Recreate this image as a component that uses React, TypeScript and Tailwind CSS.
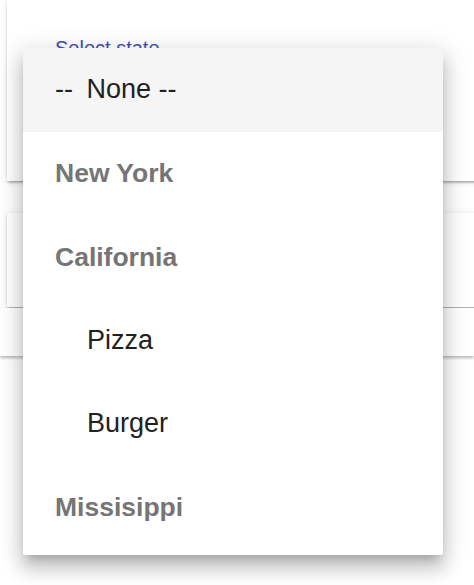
import React from "react";

type Option = { label: string; kind: "none" | "group" | "item" };

const options: Option[] = [
  { label: "--\u2002None --", kind: "none" },
  { label: "New York", kind: "group" },
  { label: "California", kind: "group" },
  { label: "Pizza", kind: "item" },
  { label: "Burger", kind: "item" },
  { label: "Missisippi", kind: "group" },
];

const cardShadow =
  "shadow-[0_2px_2px_0_rgba(0,0,0,0.14),0_3px_2px_-2px_rgba(0,0,0,0.2),0_1px_6px_0_rgba(0,0,0,0.12)]";

export default function App() {
  return (
    <div
      className="relative w-[474px] h-[585px] overflow-hidden bg-white"
      style={{ fontFamily: '"Liberation Sans", Arial, sans-serif' }}
    >
      {/* form cards behind the open menu */}
      <div className="flex flex-col">
        <div className={`ml-[7px] w-[500px] h-[181px] bg-white pl-[48px] pt-[36px] ${cardShadow}`}>
          <div className="text-[20px] leading-[24px] text-[#3f51b5]">Select state</div>
        </div>
        <div className={`ml-[7px] mt-[32px] w-[500px] h-[94px] bg-white ${cardShadow}`} />
        <div className="mt-[1px] w-full h-[48px] bg-white shadow-[0_2px_3px_0_rgba(0,0,0,0.28)]" />
      </div>

      {/* open select menu */}
      <ul className="absolute left-[23px] top-[48px] w-[420px] bg-white pb-[6px] rounded-[2px] shadow-[0_8px_9px_-5px_rgba(0,0,0,0.2),0_14px_17px_2px_rgba(0,0,0,0.14),0_5px_24px_4px_rgba(0,0,0,0.12)]">
        {options.map((o) => (
          <li
            key={o.label}
            className={
              "flex items-center h-[83.5px] leading-none " +
              (o.kind === "none"
                ? "bg-[#f5f5f5] pl-[32px] text-[27px] text-[#212121]"
                : o.kind === "group"
                ? "pl-[32px] text-[26.5px] font-bold text-[#757575]"
                : "pl-[64px] text-[27px] text-[#212121]")
            }
          >
            {o.label}
          </li>
        ))}
      </ul>
    </div>
  );
}
